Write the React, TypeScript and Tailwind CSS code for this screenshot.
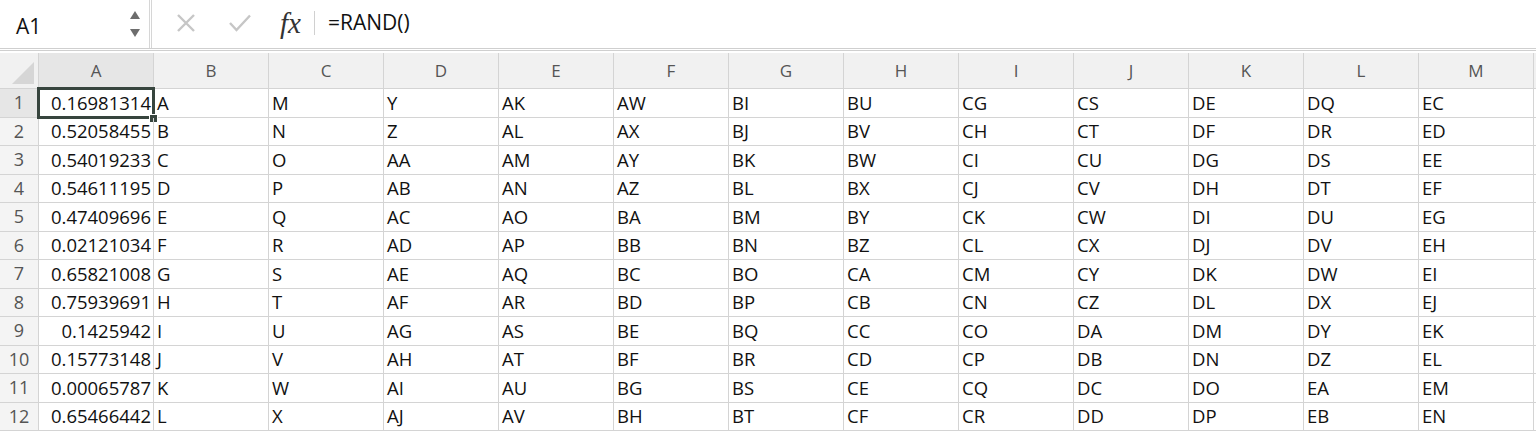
import React from "react";

const COLS = ["A", "B", "C", "D", "E", "F", "G", "H", "I", "J", "K", "L", "M"];

const VALUES = [
  "0.16981314",
  "0.52058455",
  "0.54019233",
  "0.54611195",
  "0.47409696",
  "0.02121034",
  "0.65821008",
  "0.75939691",
  "0.1425942",
  "0.15773148",
  "0.00065787",
  "0.65466442",
];

// 0 -> A, 25 -> Z, 26 -> AA ...
const colName = (n: number) => {
  let s = "";
  n = n + 1;
  while (n > 0) {
    const m = (n - 1) % 26;
    s = String.fromCharCode(65 + m) + s;
    n = Math.floor((n - 1) / 26);
  }
  return s;
};

const font = "font-['Open_Sans',_'Liberation_Sans',_sans-serif]";

const App = () => {
  return (
    <div className={`w-[1536px] h-[433px] overflow-hidden bg-white ${font}`}>
      {/* formula bar */}
      <div className="flex h-[51px] items-stretch border-b-[3px] border-double border-[#cfcfcf] bg-white">
        <div className="flex w-[152px] items-center justify-between border-r-[3px] border-double border-[#d6d6d6] pl-[16px] pr-[9px] pt-[6px]">
          <span className="text-[21px] text-[#111]">A1</span>
          <div className="-mt-[6px] flex flex-col gap-[10px]">
            <svg width="10" height="8" viewBox="0 0 10 8">
              <path d="M5 0 L10 8 L0 8 Z" fill="#6d6d6d" />
            </svg>
            <svg width="10" height="8" viewBox="0 0 10 8">
              <path d="M0 0 L10 0 L5 8 Z" fill="#6d6d6d" />
            </svg>
          </div>
        </div>
        <div className="flex flex-1 items-center pb-[2px]">
          <svg className="ml-[24px]" width="20" height="20" viewBox="0 0 20 20">
            <path d="M2 2 L18 18 M18 2 L2 18" stroke="#c6c6c6" strokeWidth="2.4" />
          </svg>
          <svg className="ml-[33px]" width="22" height="18" viewBox="0 0 22 18">
            <path d="M1 9 L7.5 16 L21 1.5" stroke="#c6c6c6" strokeWidth="2.4" fill="none" />
          </svg>
          <span className="ml-[29px] font-['Liberation_Serif',_serif] italic text-[29px] text-[#333] leading-none">
            fx
          </span>
          <div className="ml-[13px] h-[24px] w-px bg-[#d0d0d0]" />
          <span className="ml-[13px] text-[21px] text-[#111]">=RAND()</span>
        </div>
      </div>

      {/* sheet */}
      <div className="mt-[2px] grid grid-cols-[39px_repeat(13,115px)_1fr]">
        {/* header row */}
        <div className="relative h-[36px] border-r border-b border-[#d4d4d4] bg-[#f1f1f1]">
          <svg className="absolute right-[4px] bottom-[4px]" width="22" height="22" viewBox="0 0 22 22">
            <path d="M22 0 L22 22 L0 22 Z" fill="#d6d6d6" />
          </svg>
        </div>
        {COLS.map((c) => (
          <div
            key={c}
            className={`flex h-[36px] items-center justify-center border-r border-b border-[#d4d4d4] text-[17px] text-[#555] ${
              c === "A" ? "bg-[#e6e6e6]" : "bg-[#f1f1f1]"
            }`}
          >
            {c}
          </div>
        ))}
        <div className="h-[36px] border-b border-[#d4d4d4] bg-[#f1f1f1]" />

        {VALUES.map((v, r) => (
          <React.Fragment key={r}>
            <div
              className={`flex h-[28.5px] items-center justify-center border-r border-b border-[#d4d4d4] text-[18px] text-[#555] ${
                r === 0 ? "bg-[#e6e6e6]" : "bg-[#f4f4f4]"
              }`}
            >
              {r + 1}
            </div>
            <div className="relative flex h-[28.5px] items-center justify-end border-r border-b border-[#d4d4d4] pr-[2px] text-[18.5px] text-[#111]">
              {v}
              {r === 0 && (
                <>
                  <div className="pointer-events-none absolute -top-[2px] -left-[2px] -right-[2px] -bottom-[2px] border-[3px] border-[#37453e]" />
                  <div className="absolute -right-[4px] -bottom-[5px] h-[7px] w-[7px] bg-[#37453e] outline outline-white" />
                </>
              )}
            </div>
            {COLS.slice(1).map((c, k) => (
              <div
                key={c}
                className="flex h-[28.5px] items-center border-r border-b border-[#d4d4d4] pl-[3px] text-[18.5px] text-[#111]"
              >
                {colName(k * 12 + r)}
              </div>
            ))}
            <div className="h-[28.5px] border-b border-[#d4d4d4]" />
          </React.Fragment>
        ))}
      </div>
    </div>
  );
};

export default App;
